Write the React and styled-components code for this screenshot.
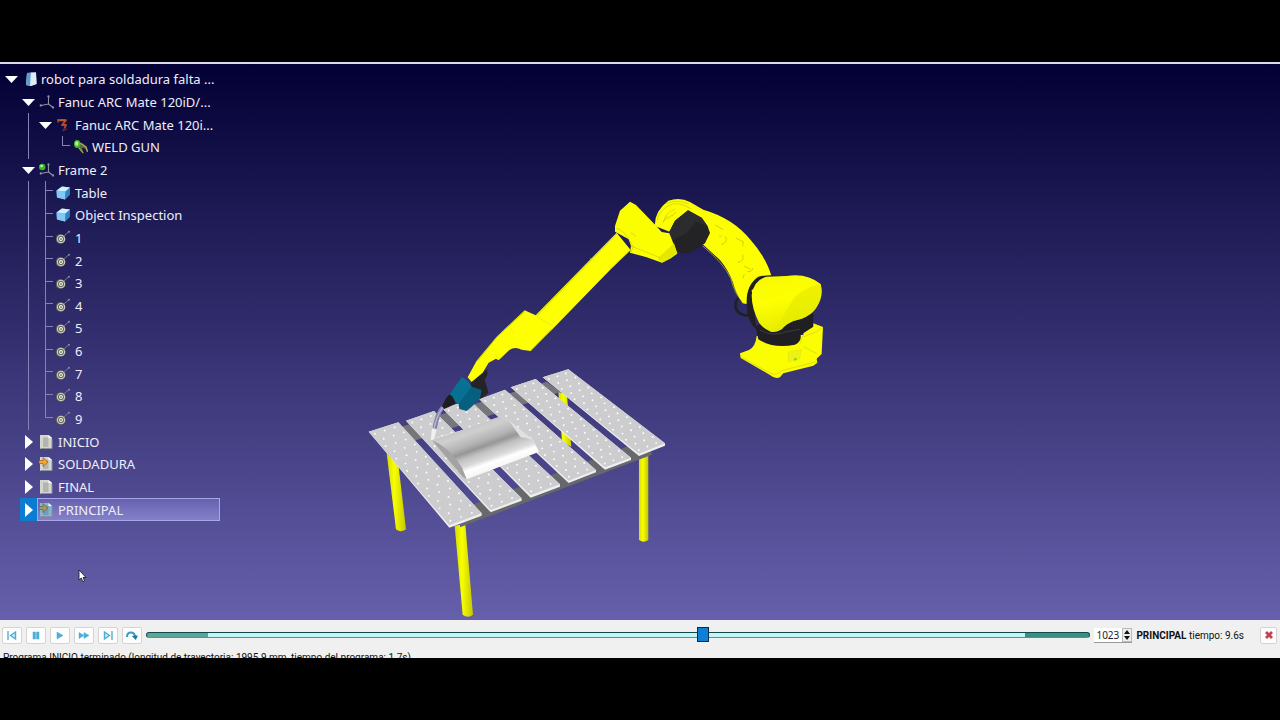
import { Fragment, useState } from 'react'
import styled, { createGlobalStyle, css } from 'styled-components'

const GlobalStyle = createGlobalStyle`
  *, *::before, *::after {
    box-sizing: border-box;
  }

  body {
    margin: 0;
    background: #000;
    font-family: "Noto Sans", "Open Sans", sans-serif;
  }
`

const Page = styled.div`
  min-height: 100vh;
  display: flex;
  flex-direction: column;
  padding: 62px 0;
`

const Viewport = styled.main`
  position: relative;
  flex: 1;
  display: flex;
  border-top: 2px solid #dcdce6;
  background: linear-gradient(#020034, #6660ac);
`

const Tree = styled.ul`
  flex: none;
  align-self: flex-start;
  display: grid;
  grid-template-columns: 100%;
  grid-auto-rows: 1fr;
  width: 220px;
  height: 453px;
  margin: 4px 0 0;
  padding: 0;
  list-style: none;
  color: #eeeefa;
  font-size: 13px;
`

const TreeRow = styled.li`
  display: flex;
  align-items: stretch;
  min-height: 0;
  padding-left: 3px;
`

const lines = {
  none: css``,
  pass: css`
    background: linear-gradient(#8582bb, #8582bb) 8px 0 / 1px 100% no-repeat;
  `,
  tee: css`
    background:
      linear-gradient(#8582bb, #8582bb) 8px 0 / 1px 100% no-repeat,
      linear-gradient(#8582bb, #8582bb) 8px 9px / 8px 1px no-repeat;
  `,
  end: css`
    background:
      linear-gradient(#8582bb, #8582bb) 8px 0 / 1px 10px no-repeat,
      linear-gradient(#8582bb, #8582bb) 8px 9px / 8px 1px no-repeat;
  `,
}

const Guide = styled.span`
  flex: none;
  width: 17px;
  ${({ $line }) => lines[$line]}
`

const Toggle = styled.button`
  flex: none;
  display: flex;
  align-items: center;
  justify-content: center;
  width: 17px;
  padding: 0;
  border: 0;
  background: ${({ $selected }) => ($selected ? '#0c7cd2' : 'none')};
`

const Item = styled.span`
  flex: 1;
  min-width: 0;
  display: flex;
  align-items: center;
  gap: 3px;
  padding-left: 2px;
  white-space: nowrap;
  ${({ $selected }) => $selected && css`
    background: linear-gradient(#6560ad, #8582cb);
    box-shadow: inset 0 0 0 1px #a9a7e8;
  `}

  svg {
    flex: none;
  }
`

const Scene = styled.svg`
  flex: 1;
  min-width: 0;
  display: block;
`

const Pointer = styled.svg`
  position: absolute;
  left: 78px;
  top: 505px;
`

const Toolbar = styled.div`
  display: flex;
  align-items: center;
  gap: 4px;
  height: 30px;
  padding: 0 3px 0 2px;
  background: #f0f0f0;
  color: #111;
  font-size: 11px;
`

const ToolButton = styled.button`
  flex: none;
  display: flex;
  align-items: center;
  justify-content: center;
  width: ${({ $narrow }) => ($narrow ? 17 : 20)}px;
  height: 17px;
  padding: 0;
  border: 1px solid #d4d4d4;
  border-radius: 2px;
  background: #fdfdfd;
`

const Timeline = styled.input`
  flex: 1;
  min-width: 0;
  height: 16px;
  margin: 0;
  appearance: none;
  background: none;

  &::-webkit-slider-runnable-track {
    height: 6px;
    border: 1px solid #16484a;
    border-bottom-color: #5f8c8c;
    border-radius: 3px;
    background: linear-gradient(
      90deg,
      #57a898 0 61px,
      #c2f6f6 61px calc(100% - 64px),
      #37917f calc(100% - 64px)
    );
  }

  &::-webkit-slider-thumb {
    appearance: none;
    width: 12px;
    height: 15px;
    margin-top: -6px;
    border: 1px solid #0b2c4c;
    background: #0f7fd6;
  }
`

const Spinner = styled.div`
  flex: none;
  display: flex;
  width: 38px;
  height: 15px;
  border-bottom: 1px solid #999;
  background: #fff;
`

const FrameInput = styled.input`
  flex: 1;
  min-width: 0;
  padding: 0 0 0 2px;
  border: 0;
  background: none;
  color: #222;
  font: 10px/14px "Noto Sans", sans-serif;
`

const Steps = styled.div`
  display: flex;
  flex-direction: column;
  width: 10px;
  border: 1px solid #bbb;
  background: #eee;
`

const Step = styled.button`
  flex: 1;
  display: flex;
  align-items: center;
  justify-content: center;
  min-height: 0;
  padding: 0;
  border: 0;
  background: none;
`

const Time = styled.span`
  flex: none;
  margin-right: 12px;
  font-family: Roboto, sans-serif;
  font-size: 10px;
  white-space: nowrap;
`

const StatusBar = styled.footer`
  height: 8px;
  padding: 0 3px;
  overflow: hidden;
  background: #f0f0f0;
  color: #111;
  font-family: Roboto, sans-serif;
  font-size: 10px;
  line-height: 16px;
  white-space: nowrap;
`

/* Tree icons */

const Icon = ({ children }) => (
  <svg width="16" height="16" viewBox="0 0 16 16" aria-hidden="true">{children}</svg>
)

const StationIcon = () => (
  <Icon>
    <path d="M5 2 14 1.500 14.500 13 9 15 4 14Z" fill="#cfe6f4" />
    <path d="M5 2 9 1.500 8 15 4 14Z" fill="#5e9dcb" />
    <path d="M9 1.500 14 1.500 14.500 13 8.500 15Z" fill="#dcebf4" />
  </Icon>
)

const Axes = () => (
  <g fill="none" stroke="#8e90a2" strokeWidth="1.100">
    <path d="M9.500 10V3M9.500 10 2 11.500M9.500 10 14 13.500" />
    <circle cx="9.500" cy="2.500" r=".6" fill="#8e90a2" />
    <circle cx="1.800" cy="11.500" r=".6" fill="#8e90a2" />
    <circle cx="14" cy="13.500" r=".6" fill="#8e90a2" />
  </g>
)

const FrameIcon = () => <Icon><Axes /></Icon>

const ActiveFrameIcon = () => (
  <Icon>
    <Axes />
    <circle cx="3.200" cy="5" r="3.200" fill="#3fb52c" />
    <circle cx="2.600" cy="4" r="1.300" fill="#c9f7a8" />
  </Icon>
)

const RobotIcon = () => (
  <Icon>
    <path d="M2 3.200h8L6 8h4l-1.500 3.500" fill="none" stroke="#b94a26" strokeWidth="1.900" strokeLinejoin="round" />
    <path d="M2 2v3.500M4 3h5" stroke="#d5683f" fill="none" />
    <path d="m6 12.500 4-2 1 2-4 2Z" fill="#5e2929" />
  </Icon>
)

const ToolIcon = () => (
  <Icon>
    <path d="m3 6 6-2 5 4 1 5-4-4-2 0 2 6-5-5Z" fill="#5d6b32" />
    <path d="m7 4 6 4 1.500 5M6 9l4 5" fill="none" stroke="#a8ab62" strokeWidth="1.200" />
    <ellipse cx="4.200" cy="5" rx="3.200" ry="4" fill="#45b82f" />
    <ellipse cx="3.800" cy="4.500" rx="1.700" ry="2.300" fill="#b9f08b" />
  </Icon>
)

const CubeIcon = () => (
  <Icon>
    <path d="M.5 5.500 6 1.500 14 2.500 13.500 10 9 14.500 1 12.500Z" fill="#4ea5df" />
    <path d="M.5 5.500 6 1.500 14 2.500 9.500 6.500Z" fill="#d5effc" />
    <path d="M.5 5.500 9.500 6.500 9 14.500 1 12.500Z" fill="#83c8f2" />
    <path d="M9.500 6.500 14 2.500 13.500 10 9 14.500Z" fill="#2f83c8" />
  </Icon>
)

const TargetIcon = () => (
  <Icon>
    <path d="m8 6 5-4.500" stroke="#77798a" />
    <circle cx="13" cy="1.800" r="1" fill="#8d8d93" />
    <circle cx="4.300" cy="9" r="5" fill="#4d5054" />
    <circle cx="5" cy="9" r="3.600" fill="none" stroke="#c9cbb4" strokeWidth="1.400" />
    <circle cx="5" cy="9" r="1.500" fill="none" stroke="#e6e7d4" strokeWidth="1.300" />
  </Icon>
)

const Sheet = ({ fill = '#d3d6cf', inner = '#b2b5ae' }) => (
  <>
    <path d="M1 1h8.500L13 4v11H1Z" fill={fill} />
    <path d="M4 3.500h5.500V13H4Z" fill={inner} />
    <path d="M9.500 1 13 4H9.500Z" fill="#fff" />
    <path d="M1.500 14.500H13V5" fill="none" stroke="#8d8f96" />
  </>
)

const ProgramIcon = () => <Icon><Sheet /></Icon>

const arrow = 'M0 4.500h4V1.500L9 6 4 10.500v-3H0Z'

const MainProgramIcon = () => (
  <Icon>
    <Sheet />
    <path d={arrow} fill="#f5a52b" stroke="#9c5d16" strokeWidth=".7" />
  </Icon>
)

const ActiveProgramIcon = () => (
  <Icon>
    <Sheet fill="#86b3ce" inner="#6d9dbf" />
    <path d={arrow} fill="#a89a5c" stroke="#6a6338" strokeWidth=".7" />
  </Icon>
)

const target = (label, line = 'tee') => ({ label, icon: TargetIcon, guides: ['none', 'pass', line] })

const rows = [
  { label: 'robot para soldadura falta ...', icon: StationIcon, guides: [], open: true },
  { label: 'Fanuc ARC Mate 120iD/...', icon: FrameIcon, guides: ['none'], open: true },
  { label: 'Fanuc ARC Mate 120i...', icon: RobotIcon, guides: ['none', 'pass'], open: true },
  { label: 'WELD GUN', icon: ToolIcon, guides: ['none', 'pass', 'none', 'end'] },
  { label: 'Frame 2', icon: ActiveFrameIcon, guides: ['none'], open: true },
  { label: 'Table', icon: CubeIcon, guides: ['none', 'pass', 'tee'] },
  { label: 'Object Inspection', icon: CubeIcon, guides: ['none', 'pass', 'tee'] },
  target('1'),
  target('2'),
  target('3'),
  target('4'),
  target('5'),
  target('6'),
  target('7'),
  target('8'),
  target('9', 'end'),
  { label: 'INICIO', icon: ProgramIcon, guides: ['none'], open: false },
  { label: 'SOLDADURA', icon: MainProgramIcon, guides: ['none'], open: false },
  { label: 'FINAL', icon: ProgramIcon, guides: ['none'], open: false },
  { label: 'PRINCIPAL', icon: ActiveProgramIcon, guides: ['none'], open: false, selected: true },
]

const StationTree = () => (
  <Tree aria-label="Station">
    {rows.map(({ label, icon: RowIcon, guides, open, selected }) => (
      <TreeRow key={label}>
        {guides.map((line, i) => <Guide key={i} $line={line} />)}
        {open !== undefined && (
          <Toggle type="button" aria-label={label} aria-expanded={open} $selected={selected}>
            <svg width="14" height="14" viewBox="0 0 14 14">
              <path d={open ? 'M0 4h13L6.500 11Z' : 'M3 0v14l8-7Z'} fill="#fff" />
            </svg>
          </Toggle>
        )}
        <Item $selected={selected}>
          <RowIcon />
          {label}
        </Item>
      </TreeRow>
    ))}
  </Tree>
)

/* 3D view */

// corners of each table slat: back left, back right, front right, front left
const slats = [
  [[26, 215], [115, 187], [365, 460], [268, 496]],
  [[138, 182], [222, 153], [485, 415], [392, 450]],
  [[248, 146], [328, 120], [600, 373], [512, 406]],
  [[358, 118], [435, 89], [708, 330], [626, 362]],
  [[452, 82], [527, 57], [813, 293], [735, 322]],
  [[548, 52], [625, 28], [915, 250], [837, 281]],
]

const lerp = (a, b, t) => a + (b - a) * t

const holes = ([a, b, c, d]) => {
  const points = []
  for (let i = 0; i < 15; i++) {
    const v = (i + 0.5) / 15
    for (let j = 0; j < 3; j++) {
      const u = (j + (i % 2 ? 0.7 : 0.35)) / 3
      points.push([
        lerp(lerp(a[0], b[0], u), lerp(d[0], c[0], u), v),
        lerp(lerp(a[1], b[1], u), lerp(d[1], c[1], u), v),
      ])
    }
  }
  return points
}

const Table = () => (
  <g transform="translate(360 360) scale(.3333)">
    <path d="M80 280 108 508Q122 520 138 508L116 320Z" fill="url(#leg)" />
    <path d="M595 95 621 104 634 260 606 245Z" fill="url(#leg)" />
    <path d="M837 285V540Q851 550 865 540V283Z" fill="url(#leg)" />
    <path d="M284 497 308 764Q324 776 339 764L316 492Z" fill="url(#leg)" />
    <path d="M110 205 560 65 602 96 160 243Z" fill="#74767b" />
    <path d="M300 455 345 431 790 264 860 236 876 284 300 502Z" fill="#66686c" />
    {slats.map((slat, i) => {
      const [a, b, c, d] = slat
      return (
        <Fragment key={i}>
          <path d={`M${a}L${b} ${c}v7L${d[0]} ${d[1] + 7}Z`} fill="#efeff1" />
          <path d={`M${a}L${b} ${c} ${d}Z`} fill="#cdcdd0" />
          {holes(slat).map(([x, y]) => <circle key={`${x},${y}`} cx={x} cy={y} r="2.800" fill="#fff" />)}
        </Fragment>
      )
    })}
    <path d="M215 240Q225 231 300 212L410 173Q430 168 446 181L520 240 537 275 320 358Z" fill="#e0e0e0" />
    <path d="M218 239 300 212 410 173Q430 168 446 181L482 232Q515 233 522 247L308 321Q285 310 275 297Z" fill="url(#sheet)" />
    <path d="M305 321 522 247 537 275 320 358Z" fill="url(#lip)" />
    <path d="M215 240 Q270 262 305 321L320 358 308 350Z" fill="#a3a3a6" />
  </g>
)

const Robot = () => (
  <>
    {/* forearm */}
    <g transform="translate(420 220) scale(.3333)">
      <path d="M143 472 170 422 230 350 314 271 347 286 590 38 632 90 570 150 400 325 332 393 305 389Q285 378 268 390L236 421 228 416 206 428 188 458 155 486Z" fill="#feff00" />
      <path d="M172 424 230 352 315 274M350 288 590 42M395 327 334 390M570 148 630 92" stroke="#b9bd12" strokeWidth="2" fill="none" />
      <path d="M350 290 398 318M272 325l9 12M226 404l11 13M510 116l15 8" stroke="#e2e510" strokeWidth="2" fill="none" />
    </g>
    {/* wrist, upper arm and base */}
    <g transform="translate(600 180) scale(.3333)">
      <path d="M440 345Q400 350 408 386 420 410 448 406" fill="none" stroke="#202024" strokeWidth="8" />
      <path d="M420 520 447 510Q467 500 470 468L610 465 612 440 640 430 669 441 665 522 650 536 652 548 640 557 550 580 540 592Q525 598 510 585L422 534Z" fill="#fbfe00" />
      <path d="M424 532 512 580Q530 588 545 572L650 545M610 466 600 490M612 470l38-15 17-12M650 520l-40-20" stroke="#cdd116" strokeWidth="2" fill="none" />
      <path d="M565 516l40-8-6 28-34 10Z" fill="#eef214" stroke="#d6d916" />
      <circle cx="586" cy="538" r="4" fill="#6cdb1c" />
      <path d="M467 440 475 478Q520 507 585 494 605 485 602 465L640 440V402L520 400Z" fill="#202024" />
      <path d="M165 138Q162 95 205 62 240 50 270 66L310 89Q400 115 452 180 500 235 515 290L440 372 428 370Q407 340 398 305 385 270 360 240L308 193 220 160Z" fill="#fdff00" />
      <path d="M172 120Q180 85 218 72 240 66 275 88M190 128Q195 98 226 87M200 70q30-13 66 2M308 198Q372 250 392 295 404 345 432 370" stroke="#c6ca0d" strokeWidth="2" fill="none" />
      <path d="M190 125l13-16M203 118l12-14M215 110l12-14M346 135l24 14M358 168q4 2 6 0M376 170q10 16-12 24M408 175l22 10-2 14M428 224q6 18-14 24M432 258l20 10M428 295l5-12M458 264q-2 14-16 10" stroke="#c4c80f" strokeWidth="2.500" fill="none" />
      <path d="M208 155 225 122 264 91 305 113 323 139 330 159 315 190 275 216Q250 222 232 215L212 184Z" fill="#232325" />
      <path d="M264 91 305 113 323 139 288 125 260 160 212 184 208 155 225 122Z" fill="#2c2c2f" />
      <path d="M45 138 60 92 90 65 108 75 166 135 185 156 208 160 232 220 212 235 186 248 140 232 90 218 93 198 86 178 45 155Z" fill="#fbfe00" />
      <path d="M222 190 232 221 212 235 186 248 173 235Z" fill="#e4e800" />
      <path d="M48 144Q75 150 98 198M93 198 180 233M92 157l16 12M100 200l-8 18" stroke="#c8cd0d" strokeWidth="2" fill="none" />
      <path d="M440 370Q438 315 475 290 520 280 545 292L455 330 470 450Q440 425 440 370Z" fill="#202024" />
      <path d="M455 345Q462 300 500 290L560 288Q620 278 662 312 672 350 648 385 635 405 605 416L580 423Q558 432 545 448 530 458 512 455 490 445 478 430 455 385 455 345Z" fill="url(#shoulder)" />
      <path d="M662 312Q615 322 585 350L560 389Q548 420 512 454 530 458 545 448 558 432 580 423L605 416Q635 405 648 385 672 350 662 312Z" fill="#e6eb00" opacity=".7" />
      <path d="M480 450Q520 472 555 456L600 448" fill="none" stroke="#3c3c40" strokeWidth="3" />
    </g>
    {/* welding torch */}
    <g transform="translate(360 360) scale(.3333)">
      <path d="M248 142Q232 160 224 205" fill="none" stroke="#8181a9" strokeWidth="13" />
      <path d="M248 142Q231 165 222 205" fill="none" stroke="#b9b9d6" strokeWidth="4" />
      <path d="M216 205 230 209 222 238 212 241Z" fill="#f3efee" />
      <path d="M331 70 362 45 382 27 382 45 374 60 386 98 362 116 340 105Z" fill="#242427" />
      <path d="M305 52Q325 60 335 80L365 90 360 116 335 140 320 153 298 147 296 132 268 104Z" fill="#075f80" />
      <path d="M305 52Q325 60 335 80L296 132Q276 122 268 104Z" fill="#087093" />
      <path d="M268 103Q280 109 287 130L268 140 252 147 247 137 258 115Z" fill="#1d1d20" />
    </g>
  </>
)

const StationView = () => (
  <Scene viewBox="220 64 1060 556" preserveAspectRatio="xMinYMin meet" role="img" aria-label="Welding cell">
    <defs>
      <linearGradient id="leg">
        <stop offset="0" stopColor="#d6dc00" />
        <stop offset=".4" stopColor="#f8ff00" />
        <stop offset="1" stopColor="#c3c800" />
      </linearGradient>
      <linearGradient id="shoulder" x1="0" y1="0" x2=".3" y2="1">
        <stop offset="0" stopColor="#f6fa00" />
        <stop offset=".5" stopColor="#feff00" />
        <stop offset="1" stopColor="#e8ec00" />
      </linearGradient>
      <linearGradient id="sheet" gradientUnits="userSpaceOnUse" x1="320" y1="200" x2="358" y2="305">
        <stop offset="0" stopColor="#c6c6c7" />
        <stop offset=".2" stopColor="#cfcfd0" />
        <stop offset=".5" stopColor="#b2b2b3" />
        <stop offset=".65" stopColor="#969697" />
        <stop offset=".8" stopColor="#c0c0c1" />
        <stop offset="1" stopColor="#dadadb" />
      </linearGradient>
      <linearGradient id="lip" gradientUnits="userSpaceOnUse" x1="410" y1="284" x2="424" y2="324">
        <stop offset="0" stopColor="#d2d2d3" />
        <stop offset=".4" stopColor="#fff" />
        <stop offset="1" stopColor="#f4f4f5" />
      </linearGradient>
    </defs>
    <Table />
    <Robot />
  </Scene>
)

/* Simulation bar */

const controls = [
  { name: 'Inicio', d: 'M3 2v9M10.500 3v7L5.500 6.500Z', outline: true },
  { name: 'Pausa', d: 'M4 3h2.500v7H4ZM7.500 3H10v7H7.500Z' },
  { name: 'Reproducir', d: 'M4 3v7l6-3.500Z' },
  { name: 'Avance rápido', d: 'M2 3.500v6l5-3ZM7 3.500v6l5-3Z' },
  { name: 'Fin', d: 'M11 2v9M3.500 3v7l5-3.500Z', outline: true },
]

const SimulationBar = () => {
  const [position, setPosition] = useState(591)
  const [frame, setFrame] = useState(1023)

  return (
    <Toolbar>
      {controls.map(({ name, d, outline }) => (
        <ToolButton key={name} type="button" aria-label={name}>
          <svg width="14" height="13" viewBox="0 0 14 13">
            <path d={d} fill={outline ? '#c5eaf5' : '#49b1d8'} stroke="#4fadd4" strokeWidth={outline ? 1.4 : 0.5} />
          </svg>
        </ToolButton>
      ))}
      <ToolButton type="button" aria-label="Repetir">
        <svg width="14" height="13" viewBox="0 0 14 13">
          <path d="M2 8Q2 3.500 6 3.500 9.500 3.500 10 7.500" fill="none" stroke="#3e9cc4" strokeWidth="2.200" />
          <path d="M6.800 7 13 6.500 10.800 11Z" fill="#1b78a4" />
        </svg>
      </ToolButton>
      <Timeline
        type="range"
        aria-label="Línea de tiempo"
        min="0"
        max="1000"
        value={position}
        onChange={e => setPosition(Number(e.target.value))}
      />
      <Spinner>
        <FrameInput
          aria-label="Velocidad"
          value={frame}
          onChange={e => setFrame(Number(e.target.value) || 0)}
        />
        <Steps>
          <Step type="button" aria-label="Más" onClick={() => setFrame(frame + 1)}>
            <svg width="6" height="4" viewBox="0 0 6 4"><path d="M0 4h6L3 0Z" fill="#111" /></svg>
          </Step>
          <Step type="button" aria-label="Menos" onClick={() => setFrame(frame - 1)}>
            <svg width="6" height="4" viewBox="0 0 6 4"><path d="M0 0h6L3 4Z" fill="#111" /></svg>
          </Step>
        </Steps>
      </Spinner>
      <Time><b>PRINCIPAL</b> tiempo: 9.6s</Time>
      <ToolButton type="button" aria-label="Cerrar" $narrow>
        <svg width="10" height="10" viewBox="0 0 10 10">
          <path d="m2 2 6 6M8 2 2 8" stroke="#c0434d" strokeWidth="2.800" />
        </svg>
      </ToolButton>
    </Toolbar>
  )
}

const App = () => (
  <>
    <GlobalStyle />
    <Page>
      <Viewport>
        <StationTree />
        <StationView />
        <Pointer width="9" height="14" viewBox="0 0 9 14" aria-hidden="true">
          <path d="M1 1v10l2.300-2 1.500 3.800 1.700-.8L5 8.500h3Z" fill="#fff" stroke="#111" strokeWidth=".8" />
        </Pointer>
      </Viewport>
      <SimulationBar />
      <StatusBar>
        Programa INICIO terminado (longitud de trayectoria: 1995.9 mm, tiempo del programa: 1.7s)
      </StatusBar>
    </Page>
  </>
)

export default App
